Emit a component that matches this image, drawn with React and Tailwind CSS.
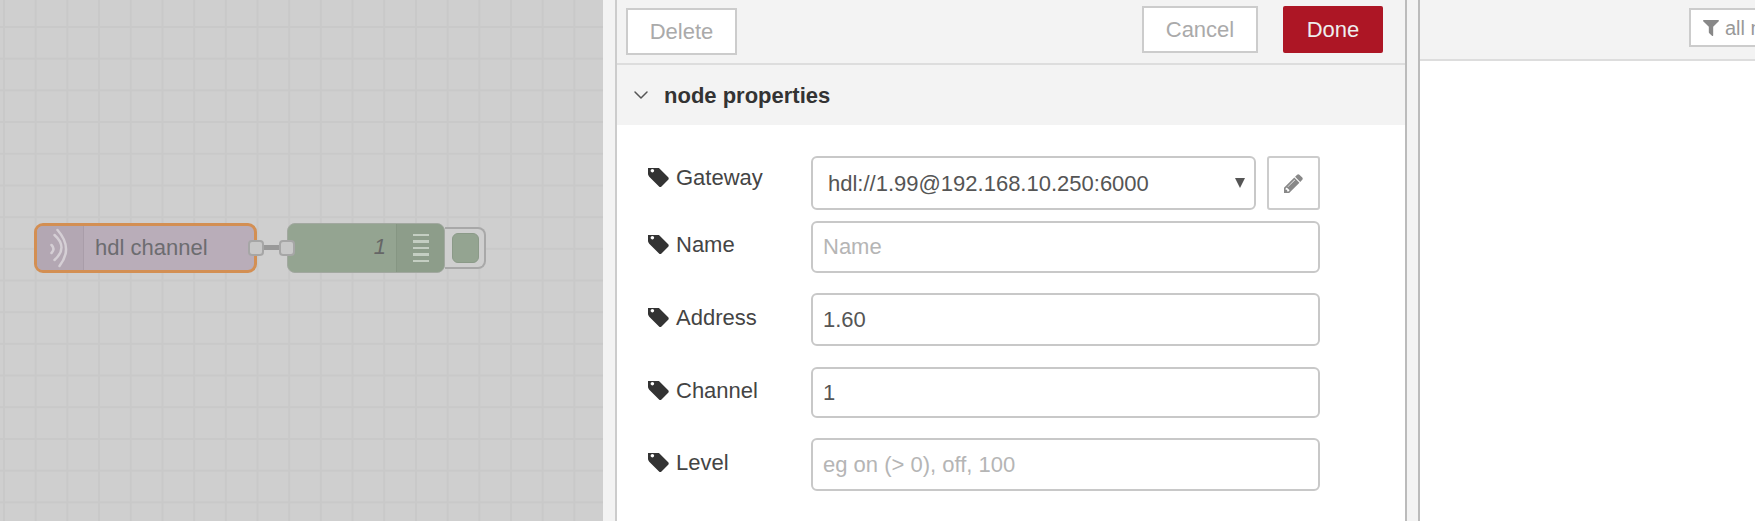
import React from 'react';
import { ChevronDown } from 'lucide-react';

const inputClass =
    'w-full h-full rounded-[6px] border-2 border-[#c8c8c8] bg-white px-[10px] text-[22px] text-[#555] outline-none placeholder:text-[#b5b5b5]';

// font-awesome 4 glyphs, the ones node-red ships with
const TagIcon = () => (
    <svg viewBox="128 256 1536 1536" className="w-[21px] h-[21px] mr-[7px] shrink-0 fill-[#333]">
        <path d="M576 448q0-53-37.5-90.5t-90.5-37.5-90.5 37.5-37.5 90.5 37.5 90.5 90.5 37.5 90.5-37.5 37.5-90.5zm1067 576q0 53-37 90l-491 492q-39 37-91 37-53 0-90-37l-715-716q-38-37-64.5-101t-26.5-117v-416q0-52 38-90t90-38h416q53 0 117 26.5t102 64.5l715 714q37 39 37 91z" />
    </svg>
);

const PencilIcon = () => (
    <svg viewBox="128 128 1536 1536" className="w-[19px] h-[19px] fill-[#888]">
        <path d="M491 1536l91-91-235-235-91 91v107h128v128h107zm523-928q0-22-22-22-10 0-17 7l-542 542q-7 7-7 17 0 22 22 22 10 0 17-7l542-542q7-7 7-17zm-54-192l416 416-832 832h-416v-416zm683 96q0 53-37 90l-166 166-416-416 166-165q36-38 90-38 53 0 91 38l235 234q37 39 37 91z" />
    </svg>
);

const FilterIcon = () => (
    <svg viewBox="192 256 1408 1408" className="w-[16px] h-[16px] mr-[6px] shrink-0 fill-[#888]">
        <path d="M1595 295q17 41-14 70l-493 493v742q0 42-39 59-13 5-25 5-27 0-45-19l-256-256q-19-19-19-45v-486l-493-493q-31-29-14-70 17-39 59-39h1280q42 0 59 39z" />
    </svg>
);

const FieldLabel = ({ children }) => (
    <label className="flex items-center w-[163px] shrink-0 text-[22px] leading-none text-[#444]">
        <TagIcon />
        <span>{children}</span>
    </label>
);

const Field = ({ label, labelClass = '', className, value, placeholder }) => (
    <div className={`flex items-start ${className}`}>
        <div className={labelClass}>
            <FieldLabel>{label}</FieldLabel>
        </div>
        <input className={inputClass} defaultValue={value} placeholder={placeholder} />
    </div>
);

const Canvas = () => (
    <div className="relative w-[603px] shrink-0 h-full bg-[#cfcfcf] bg-[linear-gradient(to_right,#c9c9c9_2px,transparent_2px),linear-gradient(to_bottom,#c9c9c9_2px,transparent_2px)] bg-[size:31.7px_31.7px] bg-[position:3px_26px]">
        {/* inject node */}
        <div className="absolute left-[34px] top-[223px] w-[223px] h-[50px] flex rounded-[9px] border-[3px] border-[#d38f53] bg-[#b9adb9]">
            <div className="w-[47px] shrink-0 flex items-center justify-center bg-[#b3a7b3] rounded-l-[6px] border-r border-[#a99da9]">
                <svg width="20" height="40" viewBox="0 0 20 40" fill="none" stroke="#d5cfd5" strokeLinecap="round">
                    <path d="M1.5 17 Q5.5 21 1.5 25" strokeWidth="2.5" />
                    <path d="M4.5 7 Q18.5 19.5 4.5 32" strokeWidth="2.5" />
                    <path d="M7.5 2 Q23.5 20 9.5 38" strokeWidth="2.5" />
                </svg>
            </div>
            <div className="pl-[11px] text-[22px] leading-[43px] text-[#6c6c70]">
                hdl channel
            </div>
        </div>
        <div className="absolute left-[248px] top-[240px] w-[16px] h-[16px] rounded-[4px] border-2 border-[#a6a6a6] bg-[#c8c8c8]" />

        {/* wire */}
        <div className="absolute left-[264px] top-[245px] w-[16px] h-[5px] bg-[#999]" />

        {/* debug node */}
        <div className="absolute left-[445px] top-[227px] w-[41px] h-[42px] rounded-r-[8px] border-2 border-l-0 border-[#a8a8a8] bg-[#cfcfcf]" />
        <div className="absolute left-[452px] top-[233px] w-[27px] h-[30px] rounded-[6px] border border-[#8b9a88] bg-[#94a491]" />
        <div className="absolute left-[287px] top-[223px] w-[158px] h-[50px] flex rounded-[8px] border border-[#a2a8a0] bg-[#94a491]">
            <div className="flex-1 text-right pr-[10px] text-[22px] leading-[46px] italic text-[#666]">1</div>
            <div className="w-[48px] shrink-0 flex flex-col items-center justify-center gap-[4px] bg-[#8d9d8a] rounded-r-[7px] border-l border-[#869683]">
                <div className="w-[16px] h-[2.5px] bg-[#c4cec2]" />
                <div className="w-[16px] h-[2.5px] bg-[#c4cec2]" />
                <div className="w-[16px] h-[2.5px] bg-[#c4cec2]" />
                <div className="w-[16px] h-[2.5px] bg-[#c4cec2]" />
                <div className="w-[16px] h-[2.5px] bg-[#c4cec2]" />
            </div>
        </div>
        <div className="absolute left-[279px] top-[240px] w-[16px] h-[16px] rounded-[4px] border-2 border-[#a6a6a6] bg-[#c8c8c8]" />
    </div>
);

const EditTray = () => (
    <div className="w-[804px] shrink-0 h-full flex flex-col bg-[#f3f3f3] pl-[12px] border-r-2 border-[#bbb] shadow-[-6px_0_8px_rgba(0,0,0,0.1)]">
        <div className="flex-1 flex flex-col border-l-2 border-[#ccc]">
            {/* toolbar */}
            <div className="h-[65px] shrink-0 flex items-start justify-between pl-[9px] pr-[22px] border-b-2 border-[#ddd]">
                <button className="mt-[8px] w-[111px] h-[47px] border-2 border-[#ccc] bg-white text-[22px] text-[#aaa]">
                    Delete
                </button>
                <div className="flex mt-[6px] gap-[25px]">
                    <button className="w-[116px] h-[47px] border-2 border-[#ccc] bg-white text-[22px] text-[#aaa]">
                        Cancel
                    </button>
                    <button className="w-[100px] h-[47px] rounded-[2px] bg-[#ad1625] text-[22px] text-[#eee]">
                        Done
                    </button>
                </div>
            </div>

            {/* section header */}
            <div className="h-[60px] shrink-0 flex items-center pl-[12px]">
                <ChevronDown className="w-[24px] h-[24px] text-[#555]" strokeWidth={1.5} />
                <span className="ml-[11px] text-[22px] font-bold text-[#333]">node properties</span>
            </div>

            {/* form */}
            <div className="flex-1 bg-white pl-[31px] pr-[85px] pt-[31px]">
                <div className="flex items-start h-[54px]">
                    <div className="pt-[11px]">
                        <FieldLabel>Gateway</FieldLabel>
                    </div>
                    <div className="flex-1 h-full flex items-center justify-between rounded-[6px] border-2 border-[#c8c8c8] pl-[15px] pr-[9px] text-[22px] text-[#555]">
                        <span>hdl://1.99@192.168.10.250:6000</span>
                        <svg width="10" height="10" viewBox="0 0 10 10" fill="#555">
                            <path d="M0 0 H10 L5 10 Z" />
                        </svg>
                    </div>
                    <button className="ml-[11px] w-[53px] h-full flex items-center justify-center rounded-[3px] border-2 border-[#ccc] bg-white">
                        <PencilIcon />
                    </button>
                </div>
                <Field label="Name" labelClass="pt-[13px]" className="mt-[11px] h-[52px]" placeholder="Name" />
                <Field label="Address" labelClass="pt-[14px]" className="mt-[20px] h-[53px]" value="1.60" />
                <Field label="Channel" labelClass="pt-[13px]" className="mt-[21px] h-[51px]" value="1" />
                <Field label="Level" labelClass="pt-[14px]" className="mt-[20px] h-[53px]" placeholder="eg on (> 0), off, 100" />
            </div>
        </div>
    </div>
);

const Sidebar = () => (
    <div className="flex-1 min-w-0 h-full flex flex-col bg-[#f3f3f3] pl-[11px] overflow-hidden">
        <div className="flex-1 flex flex-col border-l-2 border-[#bbb] bg-white">
            <div className="h-[61px] shrink-0 bg-[#f3f3f3] border-b-2 border-[#ddd] pl-[269px]">
                <div className="mt-[8px] w-[120px] h-[39px] flex items-center border-2 border-[#ccc] bg-white pl-[12px] text-[20px] text-[#999] whitespace-nowrap">
                    <FilterIcon />
                    <span>all nodes</span>
                </div>
            </div>
        </div>
    </div>
);

export default function App() {
    return (
        <div className="flex w-[1755px] h-[521px] overflow-hidden bg-white font-['Liberation_Sans',sans-serif]">
            <Canvas />
            <EditTray />
            <Sidebar />
        </div>
    );
}
